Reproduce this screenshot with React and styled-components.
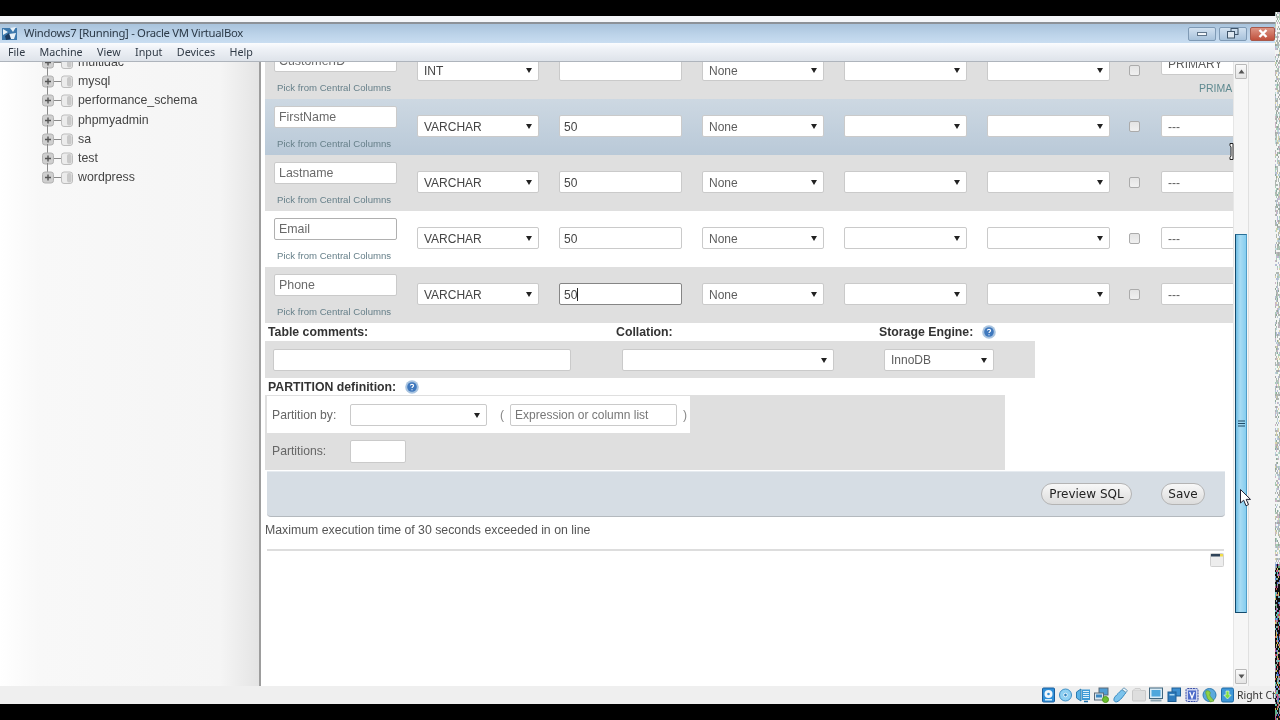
import React from "react";
import styled, { createGlobalStyle } from "styled-components";

const Global = createGlobalStyle`
  html, body { margin: 0; padding: 0; background: #000; overflow: hidden; }
  #root { width: 1280px; height: 720px; }
`;

const Screen = styled.div`
  position: relative; width: 1280px; height: 720px; background: #000;
  display: flex; flex-direction: column; overflow: hidden;
  font-family: "Liberation Sans", Arial, sans-serif; filter: blur(0.35px);
`;
const Letterbox = styled.div` height: 16px; flex: none; background: #000; `;
const Window = styled.div`
  width: 1275px; height: 688px; flex: none; display: flex; flex-direction: column; background: #f2f2f2;
`;
const WindowEdge = styled.div`
  height: 6px; flex: none; background: #f4f6f9; border-bottom: 2px solid #8d9298;
`;
const TitleBar = styled.div`
  height: 19px; flex: none; display: flex; align-items: center; padding-left: 2px;
  background: linear-gradient(180deg, #a9c3dc 0%, #bcd3e9 55%, #c9ddf1 100%);
`;
const TitleText = styled.span`
  margin: 0 0 2px 6px; font: 11.3px "Noto Sans", sans-serif; letter-spacing: -0.3px; color: #2c3a48; white-space: nowrap; flex: 1;
`;
const WinButton = styled.div`
  width: ${p => p.$w}px; height: 14px; margin-right: ${p => p.$mr}px; display: flex; align-items: center; justify-content: center;
  border: 1px solid ${p => (p.$close ? "#a8584a" : "#7f9ab5")}; border-radius: 2px; box-sizing: border-box;
  background: ${p => (p.$close ? "linear-gradient(180deg,#dd9585,#c0503c)" : "linear-gradient(180deg,#d2e1f0,#a8c2db)")};
`;
const MenuBar = styled.div`
  height: 18px; flex: none; display: flex; align-items: center; padding-left: 8px; gap: 14.4px;
  background: linear-gradient(180deg, #fbfcfe 0%, #eff2f7 30%, #dee3ea 100%);
  border-bottom: 1px solid #aeb4bc; box-sizing: content-box;
  font: 10.75px "Noto Sans", sans-serif; color: #303a46;
`;
const Main = styled.div` height: 624px; flex: none; display: flex; `;
const Nav = styled.div`
  width: 259px; flex: none; overflow: hidden;
  background: linear-gradient(90deg, #fff 0%, #f8f8f8 15%, #f5f5f5 85%, #e4e4e4 100%);
`;
const TreeList = styled.div` margin-top: -10px; padding-left: 42px; `;
const TreeRow = styled.div`
  height: 19.3px; display: flex; align-items: center; gap: 5px;
  font-size: 12.35px; color: #444; white-space: nowrap;
`;
const NavDivider = styled.div` width: 2px; flex: none; background: #9d9d9d; `;
const Content = styled.div` width: 972px; flex: none; overflow: hidden; background: #fff; `;
const Scrolled = styled.div` margin-top: -19px; padding-left: 4px; `;
const ColumnRow = styled.div`
  height: 56px; display: flex; align-items: flex-start; padding-left: 9px; gap: 20px; overflow: hidden;
  background: ${p => ({ gray: "#dfdfdf", white: "#fff", blue: "linear-gradient(180deg,#cdd8e2,#b9c9d8)" }[p.$tone])};
`;
const NameCell = styled.div` width: 123px; flex: none; `;
const Field = styled.div`
  box-sizing: border-box; flex: none; height: ${p => p.$h || 22}px; width: ${p => p.$w}px;
  margin-top: ${p => p.$top ?? 0}px;
  background: #fff; border: 1px solid ${p => (p.$focus ? "#858585" : p.$dark ? "#b0b0b0" : "#cacaca")}; border-radius: 2px;
  padding: 0 ${p => p.$pad ?? 6}px; font-size: 12px; line-height: ${p => p.$lh || 20}px; color: ${p => p.$color || "#5d5d5d"}; white-space: nowrap; overflow: hidden;
`;
const NameField = styled(Field)` font-size: 12.4px; padding: 0 4px; line-height: 20px; color: #6a6a6a; `;
const Caret = styled.span` display: inline-block; width: 1px; height: 13px; background: #222; vertical-align: -2px; `;
const SelectBox = styled(Field)`
  position: relative; padding-right: 18px;
  &::after {
    content: ""; position: absolute; right: 6px; top: 8px;
    border-left: 3px solid transparent; border-right: 3px solid transparent; border-top: 5px solid #222;
  }
`;
const Hint = styled.div`
  margin: 10px 0 0 3px; font-size: 9.6px; line-height: 11px; color: #67808a; white-space: nowrap;
`;
const Check = styled.div`
  width: 11px; height: 11px; flex: none; box-sizing: border-box; margin: 22px 1px 0 -1px;
  background: linear-gradient(180deg, #e4e4e4, #f0f0f0); border: 1px solid #ababab; border-radius: 2px;
`;
const IndexCell = styled.div` flex: none; width: 120px; `;
const IndexLink = styled.div`
  margin: 7px 0 0 38px; font-size: 10.5px; line-height: 12px; color: #5f8a90;
`;
const Labels = styled.div` height: 18px; display: flex; padding-left: 3px; align-items: center; `;
const Heading = styled.div`
  width: ${p => p.$w || "auto"}; flex: none; font-weight: bold; font-size: 12.3px; color: #333; display: flex; align-items: center; gap: 6px; white-space: nowrap;
`;
const CommentsBlock = styled.div`
  width: 770px; height: 37px; box-sizing: border-box; padding: 8px 0 0 8px; background: #dfdfdf; display: flex; gap: 50.5px;
`;
const PartitionHeading = styled.div` height: 17px; display: flex; align-items: center; padding-left: 3px; `;
const PartitionBlock = styled.div` width: 740px; height: 75px; background: #dfdfdf; padding-top: 1px; box-sizing: border-box; `;
const PartitionRow = styled.div`
  width: 423px; height: 37px; margin-left: 2px; box-sizing: border-box; display: flex; align-items: center;
  background: ${p => (p.$white ? "#fff" : "transparent")}; padding-left: 5px; color: #666; font-size: 12.2px;
`;
const PartitionsRow = styled(PartitionRow)` margin-top: 6px; height: 24px; `;
const RowLabel = styled.span` width: 78px; flex: none; `;
const Paren = styled.span` color: #888; margin: ${p => p.$m}; `;
const FooterBar = styled.div`
  margin: 1px 0 0 2px; width: 958px; height: 46px; box-sizing: border-box; display: flex; justify-content: flex-end; align-items: center; gap: 29px;
  padding: 0 20px 0 0; background: #d6dde4; border-bottom: 1px solid #b4b9be; border-top: 1px solid #e6ebf0;
  border-radius: 0 0 4px 4px;
`;
const PillButton = styled.div`
  height: 22px; width: ${p => p.$w}px; text-align: center; border: 1px solid #b4b4b4; border-radius: 11px; box-sizing: border-box;
  background: linear-gradient(180deg, #f8f8f8, #dcdcdc); font: 12px/20px "DejaVu Sans", sans-serif; color: #222; white-space: nowrap;
`;
const Message = styled.div` height: 32px; font-size: 12.3px; line-height: 26px; color: #555; `;
const Rule = styled.div` margin-left: 2px; width: 957px; height: 2px; background: #dddddd; `;
const NoteRow = styled.div` display: flex; justify-content: flex-end; width: 959px; padding-top: 2px; `;
const ScrollBar = styled.div`
  width: 16px; flex: none; box-sizing: border-box; padding: 2px 1px; display: flex; flex-direction: column;
  background: #f6f6f6; border-left: 1px solid #e6e6e6; border-right: 1px solid #e0e0e0;
`;
const ScrollButton = styled.div`
  height: 15px; flex: none; box-sizing: border-box; border: 1px solid #b9b9b9; border-radius: 1px; display: flex; align-items: center; justify-content: center;
  background: linear-gradient(180deg,#fafafa,#e4e4e4);
`;
const ScrollThumb = styled.div`
  height: 379px; margin-top: 155px; flex: none; box-sizing: border-box; display: flex; align-items: center; justify-content: center;
  border: 1px solid #134a6c; border-top-color: #2a6f96; border-right-color: #4f9dc8;
  background: linear-gradient(90deg, #6fbde4, #a8dcf4 40%, #86cdef 100%);
`;
const Spacer = styled.div` flex: 1; `;
const Gutter = styled.div` flex: 1; background: #f4f4f4; `;
const StatusBar = styled.div`
  height: 18px; flex: none; display: flex; align-items: center; justify-content: flex-end; background: #efefef; overflow: hidden;
`;
const StatusIcons = styled.div` display: flex; align-items: center; gap: 3.7px; `;
const StatusText = styled.span`
  margin-left: 3px; width: 38px; overflow: hidden; font: 10.4px "Noto Sans", sans-serif; color: #333; white-space: nowrap;
`;
const Overlay = styled.svg`
  position: absolute; left: ${p => p.$x}px; top: ${p => p.$y}px; overflow: visible;
`;

const TreeIcon = ({ last }) => (
  <svg width="31" height="20" viewBox="0 0 31 20" style={{ flex: "none", overflow: "visible" }}>
    <path d={last ? "M5.5 -4V10" : "M5.5 -4V24"} stroke="#8a8a8a" fill="none" />
    <path d="M11 10.5H19" stroke="#8a8a8a" fill="none" />
    <rect x="0.5" y="5" width="11" height="11" rx="2.5" fill="#cfcfcf" stroke="#b2b2b2" />
    <path d="M3 10.5H9M6 7.5V13.5" stroke="#555" strokeWidth="1.4" />
    <rect x="19.5" y="5" width="11" height="11.5" rx="2.5" fill="#ececec" stroke="#bdbdbd" />
    <rect x="25" y="6" width="4.5" height="9.5" rx="2" fill="#c9c9c9" />
  </svg>
);

const Help = () => (
  <svg width="14" height="14" viewBox="0 0 14 14" style={{ flex: "none", marginLeft: 3 }}>
    <circle cx="7" cy="7" r="6.8" fill="#a9c4e0" />
    <circle cx="7" cy="7" r="4.8" fill="#3f78bd" />
    <path d="M5.4 5.6C5.4 3.9 8.6 3.9 8.6 5.7C8.6 6.8 7 6.8 7 8M7 9.2V10.3" stroke="#fff" fill="none" strokeWidth="1.1" />
  </svg>
);

const Ico = ({ w = 14, children }) => (
  <svg width={w} height="16" viewBox={`0 0 ${w} 16`} style={{ flex: "none" }}>{children}</svg>
);

const statusIcons = [
  <Ico key="hd" w={13}><rect x="0.5" y="1" width="12" height="14" rx="1" fill="#2f8fd8" stroke="#1c5e9c" /><circle cx="6.5" cy="7" r="4" fill="#f2f7fb" /><circle cx="6.5" cy="7" r="1.3" fill="#2f8fd8" /><rect x="3" y="12" width="7" height="1.5" fill="#d6ebf8" /></Ico>,
  <Ico key="cd" w={13}><circle cx="6.5" cy="8" r="6" fill="#8fd0f2" stroke="#3d8fc6" /><circle cx="6.5" cy="8" r="1.8" fill="#2a7fbd" stroke="#e8f5fc" /></Ico>,
  <Ico key="au" w={15}><path d="M0.5 5L5 2V14L0.5 11Z" fill="#5cb3e6" stroke="#2c7cb0" /><rect x="6" y="2.5" width="8" height="10.5" fill="#3f9ad6" /><path d="M7 4.5H13M7 6.5H13M7 8.5H13M7 10.5H13" stroke="#dff1fb" /><path d="M8 14.5H12" stroke="#1f6fa8" strokeWidth="1.5" /></Ico>,
  <Ico key="net" w={15}><rect x="5" y="1" width="9" height="7" fill="#4f9dd4" stroke="#5a6a78" /><rect x="0.5" y="6" width="9" height="7" fill="#d9e7f1" stroke="#5a6a78" /><rect x="2" y="7.5" width="6" height="3" fill="#3a87c2" /><circle cx="11.5" cy="12.5" r="3" fill="#6cbf2e" stroke="#4e9a1d" /></Ico>,
  <Ico key="usb" w={15}><path d="M1 13.5C0.5 10 3 9 9 2.5L13 5.5C9 11 6 15 2.5 15Z" fill="#7cc3ec" stroke="#2f86bf" /><path d="M9 2.5L11 0.8L14.4 3.6L13 5.5Z" fill="#eaf5fb" stroke="#6f9cb8" /></Ico>,
  <Ico key="sf" w={14}><rect x="0.5" y="3.5" width="13" height="10.5" rx="0.5" fill="#dedede" stroke="#c9c9c9" /><path d="M1 3.5L3 1.5H8L9 3.5" fill="#e4e4e4" stroke="#cfcfcf" /></Ico>,
  <Ico key="dp" w={14}><rect x="0.5" y="1" width="13" height="10.5" fill="#d8ebf6" stroke="#40677f" /><rect x="2.5" y="3" width="9" height="6.5" fill="#4fa7dc" /><path d="M1.5 13.5H12.5" stroke="#8da4b2" strokeWidth="2" /></Ico>,
  <Ico key="cap" w={14}><rect x="5" y="1" width="8.5" height="8" fill="#3e8fd0" stroke="#1e5f96" /><rect x="1" y="5" width="8" height="9.5" fill="#2f7cbd" stroke="#1e5f96" /><rect x="2.5" y="7" width="5" height="1.5" fill="#a9d6f2" /></Ico>,
  <Ico key="vt" w={14}><rect x="1" y="1.5" width="12" height="13" rx="1.5" fill="#cfd6f0" stroke="#3a4fa8" strokeDasharray="2 0.7" /><rect x="3" y="3.5" width="8" height="9" fill="#4d6bc9" /><path d="M4.7 5L7 11L9.3 5" stroke="#fff" strokeWidth="1.3" fill="none" /></Ico>,
  <Ico key="gl" w={15}><circle cx="7.5" cy="8" r="6.5" fill="#5aa9dc" stroke="#2f7cb2" /><path d="M4 4C7 3 9 5 8 7S10 11 12 14L8 15C7 12 5 12 5 10S3 7 4 4Z" fill="#8fd04a" stroke="#5b9b22" strokeWidth="0.6" /></Ico>,
  <Ico key="ga" w={13}><rect x="0.5" y="1" width="12" height="14" rx="1.5" fill="#3e97d8" stroke="#1f6aa6" /><path d="M6.5 12L2.8 8H5V4H8V8H10.2Z" fill="#7edc46" stroke="#e4f8d8" strokeWidth="0.7" /></Ico>,
];

function hash(i) {
  const x = Math.sin(i * 12.9898) * 43758.5453;
  return x - Math.floor(x);
}
const colors = ["#8aa7c8", "#b85c9e", "#5fae7c", "#d4c05a", "#4a6ed0", "#c94f4f", "#a0a0a0", "#60c0c0"];
const muted = ["#b9c6d4", "#cbb4c6", "#a9cdb6", "#d8d2a8", "#b4bcd6", "#a8a8a8", "#8fa89a", "#bcd8d8"];
const Noise = () => {
  const cells = [];
  for (let r = 0; r < 354; r++) {
    const y = r * 2;
    const dense = y > 551;
    for (let c = 0; c < 5; c++) {
      const h = hash(r * 7 + c * 131 + 1);
      let fill;
      if (dense) fill = h < 0.45 ? "#111" : colors[Math.floor(h * 97) % colors.length];
      else if (h < 0.4) fill = muted[Math.floor(h * 197) % muted.length];
      else fill = h < 0.8 ? "#f3f5f3" : "#aeb6b0";
      cells.push(<rect key={`${r}-${c}`} x={c} y={y} width="1" height="2" fill={fill} />);
    }
  }
  return (
    <Overlay $x={1275} $y={12} width="5" height="708" viewBox="0 0 5 708">
      <rect width="5" height="708" fill="#eee" />
      {cells}
    </Overlay>
  );
};

const databases = ["multidac", "mysql", "performance_schema", "phpmyadmin", "sa", "test", "wordpress"];
const columns = [
  { name: "CustomerID", type: "INT", len: "", tone: "gray", index: "PRIMARY", link: "PRIMARY" },
  { name: "FirstName", type: "VARCHAR", len: "50", tone: "blue", index: "---" },
  { name: "Lastname", type: "VARCHAR", len: "50", tone: "gray", index: "---" },
  { name: "Email", type: "VARCHAR", len: "50", tone: "white", index: "---", dark: true },
  { name: "Phone", type: "VARCHAR", len: "50", tone: "gray", index: "---", focus: true },
];

export default function App() {
  return (
    <Screen>
      <Global />
      <Letterbox />
      <Window>
        <WindowEdge />
        <TitleBar>
          <svg width="16" height="15" viewBox="0 0 16 15" style={{ flex: "none" }}>
            <rect x="0" y="2" width="15" height="12" fill="#3d78ac" />
            <path d="M1 3L6 6L1 9ZM8 2L14 1L11 6ZM7 8L14 7L12 13L6 13Z" fill="#e8f1f8" />
            <path d="M3 10L7 7L9 13L4 14Z" fill="#1d3c62" />
          </svg>
          <TitleText>Windows7 [Running] - Oracle VM VirtualBox</TitleText>
          <WinButton $w={28} $mr={3}>
            <svg width="10" height="4"><rect x="0.5" y="0.5" width="9" height="3" fill="#f2f6fa" stroke="#60758a" /></svg>
          </WinButton>
          <WinButton $w={28} $mr={3}>
            <svg width="12" height="11"><rect x="4" y="0.5" width="7" height="6" fill="none" stroke="#3f5469" /><rect x="0.5" y="3.5" width="7" height="6.5" fill="#dfe9f2" stroke="#3f5469" /></svg>
          </WinButton>
          <WinButton $w={25} $mr={0} $close>
            <svg width="10" height="9"><path d="M1.5 1L8.5 8M8.5 1L1.5 8" stroke="#fff" strokeWidth="2.4" /></svg>
          </WinButton>
        </TitleBar>
        <MenuBar>
          <span>File</span><span>Machine</span><span>View</span><span>Input</span><span>Devices</span><span>Help</span>
        </MenuBar>
        <Main>
          <Nav>
            <TreeList>
              {databases.map((d, i) => (
                <TreeRow key={d}><TreeIcon last={i === databases.length - 1} />{d}</TreeRow>
              ))}
            </TreeList>
          </Nav>
          <NavDivider />
          <Content>
            <Scrolled>
              {columns.map(c => (
                <ColumnRow key={c.name} $tone={c.tone}>
                  <NameCell>
                    <NameField $w={123} $top={7} $dark={c.dark}>{c.name}</NameField>
                    <Hint>Pick from Central Columns</Hint>
                  </NameCell>
                  <SelectBox $w={122} $top={16} $lh={22} $color="#444">{c.type}</SelectBox>
                  <Field $w={123} $top={16} $lh={22} $pad={4} $color="#444" $focus={c.focus}>
                    {c.len}{c.focus && <Caret />}
                  </Field>
                  <SelectBox $w={122} $top={16} $lh={22}>None</SelectBox>
                  <SelectBox $w={123} $top={16} />
                  <SelectBox $w={123} $top={16} />
                  <Check />
                  <IndexCell>
                    <Field $w={120} $top={c.link ? 10 : 16} $lh={c.link ? 20 : 22}>{c.index}</Field>
                    {c.link && <IndexLink>{c.link}</IndexLink>}
                  </IndexCell>
                </ColumnRow>
              ))}
              <Labels>
                <Heading $w="348px">Table comments:</Heading>
                <Heading $w="263px">Collation:</Heading>
                <Heading>Storage Engine: <Help /></Heading>
              </Labels>
              <CommentsBlock>
                <Field $w={298} />
                <SelectBox $w={212} />
                <SelectBox $w={110}>InnoDB</SelectBox>
              </CommentsBlock>
              <PartitionHeading>
                <Heading>PARTITION definition: <Help /></Heading>
              </PartitionHeading>
              <PartitionBlock>
                <PartitionRow $white>
                  <RowLabel>Partition by:</RowLabel>
                  <SelectBox $w={137} />
                  <Paren $m="0 6px 0 13px">(</Paren>
                  <Field $w={167} $pad={4} $color="#777">Expression or column list</Field>
                  <Paren $m="0 0 0 6px">)</Paren>
                </PartitionRow>
                <PartitionsRow>
                  <RowLabel>Partitions:</RowLabel>
                  <Field $w={56} $h={23} />
                </PartitionsRow>
              </PartitionBlock>
              <FooterBar>
                <PillButton $w={91}>Preview SQL</PillButton>
                <PillButton $w={44}>Save</PillButton>
              </FooterBar>
              <Message>Maximum execution time of 30 seconds exceeded in on line</Message>
              <Rule />
              <NoteRow>
                <svg width="14" height="14" viewBox="0 0 14 14">
                  <rect x="0.5" y="0.5" width="13" height="13" rx="1" fill="#ededed" stroke="#d0d0d0" />
                  <rect x="1" y="1" width="9" height="2.5" fill="#2f4358" />
                  <rect x="10" y="1" width="3" height="2.5" fill="#f0dc4a" />
                </svg>
              </NoteRow>
            </Scrolled>
          </Content>
          <ScrollBar>
            <ScrollButton>
              <svg width="7" height="5"><path d="M3.5 0.5L6.5 4.5H0.5Z" fill="#555" /></svg>
            </ScrollButton>
            <ScrollThumb>
              <svg width="7" height="7"><path d="M0 1H7M0 3.5H7M0 6H7" stroke="#1f4a66" /></svg>
            </ScrollThumb>
            <Spacer />
            <ScrollButton>
              <svg width="7" height="5"><path d="M3.5 4.5L6.5 0.5H0.5Z" fill="#555" /></svg>
            </ScrollButton>
          </ScrollBar>
          <Gutter />
        </Main>
        <StatusBar>
          <StatusIcons>{statusIcons}</StatusIcons>
          <StatusText>Right Ctrl</StatusText>
        </StatusBar>
      </Window>
      <Letterbox />
      <Noise />
      <Overlay $x={1229} $y={143} width="4" height="17" viewBox="0 0 4 17">
        <path d="M4 0.5H1V2.5L2 4V13L1 14.5V16.5H4Z" fill="#fff" stroke="#222" />
      </Overlay>
      <Overlay $x={1240} $y={489} width="12" height="18" viewBox="0 0 12 18">
        <path d="M0.5 0.5V14L3.7 11.2L6 16.8L8.5 15.6L6.2 10.4H10.5Z" fill="#fff" stroke="#223" />
      </Overlay>
    </Screen>
  );
}
